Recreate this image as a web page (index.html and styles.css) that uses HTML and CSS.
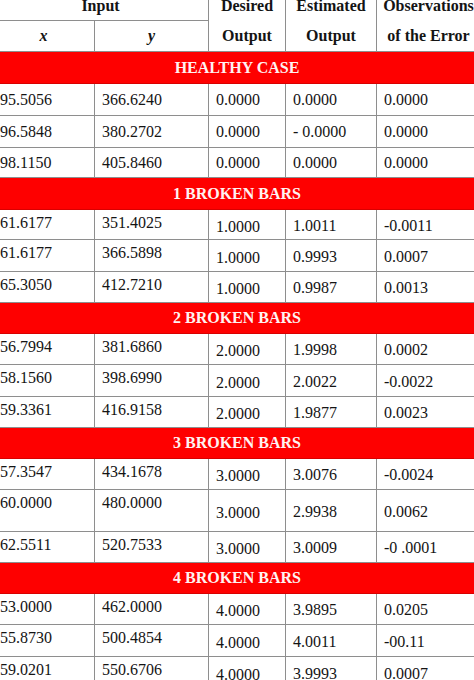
FILE: index.html
```html
<!DOCTYPE html>
<html>
<head>
<meta charset="utf-8">
<link rel="stylesheet" href="styles.css">
</head>
<body>
<div class="frame">
<table class="results">
  <colgroup>
    <col class="c1"><col class="c2"><col class="c3"><col class="c4"><col class="c5">
  </colgroup>
  <thead>
    <tr class="h1">
      <th colspan="2" class="under">Input</th>
      <th rowspan="2" class="two">Desired<br>Output</th>
      <th rowspan="2" class="two">Estimated<br>Output</th>
      <th rowspan="2" class="two">Observations<br>of the Error</th>
    </tr>
    <tr class="h2">
      <th class="var">x</th>
      <th class="var">y</th>
    </tr>
  </thead>
  <tbody>
    <tr class="sec r32"><td colspan="5">HEALTHY CASE</td></tr>
    <tr class="r32 mid"><td>95.5056</td><td>366.6240</td><td>0.0000</td><td>0.0000</td><td>0.0000</td></tr>
    <tr class="r32 mid"><td>96.5848</td><td>380.2702</td><td>0.0000</td><td>- 0.0000</td><td>0.0000</td></tr>
    <tr class="r30 mid"><td>98.1150</td><td>405.8460</td><td>0.0000</td><td>0.0000</td><td>0.0000</td></tr>

    <tr class="sec r32"><td colspan="5">1 BROKEN BARS</td></tr>
    <tr class="r30 split"><td>61.6177</td><td>351.4025</td><td>1.0000</td><td>1.0011</td><td>-0.0011</td></tr>
    <tr class="r32 split"><td>61.6177</td><td>366.5898</td><td>1.0000</td><td>0.9993</td><td>0.0007</td></tr>
    <tr class="r31 split"><td>65.3050</td><td>412.7210</td><td>1.0000</td><td>0.9987</td><td>0.0013</td></tr>

    <tr class="sec r31"><td colspan="5">2 BROKEN BARS</td></tr>
    <tr class="r31 split"><td>56.7994</td><td>381.6860</td><td>2.0000</td><td>1.9998</td><td>0.0002</td></tr>
    <tr class="r32 split"><td>58.1560</td><td>398.6990</td><td>2.0000</td><td>2.0022</td><td>-0.0022</td></tr>
    <tr class="r31 split"><td>59.3361</td><td>416.9158</td><td>2.0000</td><td>1.9877</td><td>0.0023</td></tr>

    <tr class="sec r31"><td colspan="5">3 BROKEN BARS</td></tr>
    <tr class="r31 split"><td>57.3547</td><td>434.1678</td><td>3.0000</td><td>3.0076</td><td>-0.0024</td></tr>
    <tr class="r42 split"><td>60.0000</td><td>480.0000</td><td>3.0000</td><td>2.9938</td><td>0.0062</td></tr>
    <tr class="r31 split"><td>62.5511</td><td>520.7533</td><td>3.0000</td><td>3.0009</td><td>-0 .0001</td></tr>

    <tr class="sec r31"><td colspan="5">4 BROKEN BARS</td></tr>
    <tr class="r31 split"><td>53.0000</td><td>462.0000</td><td>4.0000</td><td>3.9895</td><td>0.0205</td></tr>
    <tr class="r32 split"><td>55.8730</td><td>500.4854</td><td>4.0000</td><td>4.0011</td><td>-00.11</td></tr>
    <tr class="r32 split"><td>59.0201</td><td>550.6706</td><td>4.0000</td><td>3.9993</td><td>0.0007</td></tr>
  </tbody>
</table>
</div>
</body>
</html>
```

FILE: styles.css
```css
html, body {
  margin: 0;
  padding: 0;
  background: #ffffff;
  overflow: hidden;
}

body {
  width: 474px;
  height: 680px;
  font-family: "Liberation Serif", "Times New Roman", serif;
  font-size: 16px;
  color: #141414;
}

.frame {
  margin: -11px 0 0 -7px;
  width: 488px;
}

.results {
  width: 488px;
  table-layout: fixed;
  border-collapse: separate;
  border-spacing: 0;
}

.c1 { width: 102px; }
.c2 { width: 114px; }
.c3 { width: 77px; }
.c4 { width: 91px; }
.c5 { width: 104px; }

.results th,
.results td {
  padding: 0 2px 0 7px;
  border-right: 1px solid #8e8e8e;
  border-bottom: 1px solid #8e8e8e;
  white-space: nowrap;
  overflow: hidden;
  box-sizing: border-box;
}

.results th {
  font-weight: bold;
  text-align: center;
  padding: 0;
}

.h1 { height: 31px; }
.h2 { height: 31px; }

.two {
  line-height: 30px;
  vertical-align: top;
}

.results th.two {
  padding-top: 2px;
}

.results th.under {
  vertical-align: top;
  padding-top: 8px;
  line-height: 18px;
}

.var {
  font-style: italic;
  vertical-align: middle;
}

.r30 { height: 30px; }
.r31 { height: 31px; }
.r32 { height: 32px; }
.r42 { height: 42px; }

.sec td {
  background: #fe0000;
  color: #fff2f2;
  font-weight: bold;
  text-align: center;
  padding: 0;
  border-bottom: 1px solid #d80000;
  border-right: none;
}

.mid td {
  vertical-align: middle;
}

.split td {
  vertical-align: middle;
  padding-top: 2px;
}

.split td:nth-child(1),
.split td:nth-child(2) {
  vertical-align: top;
  padding-top: 4px;
}

.split td:nth-child(3) {
  padding-top: 4px;
}
```
